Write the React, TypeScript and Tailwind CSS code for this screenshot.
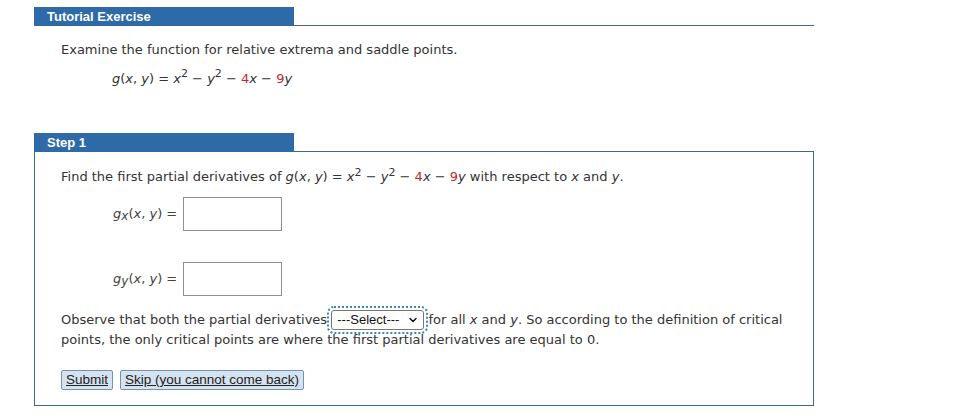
import { ChevronDown } from "lucide-react";

const Red = ({ children }: { children: React.ReactNode }) => (
  <span className="text-[#c0282d]">{children}</span>
);

const V = ({ children }: { children: React.ReactNode }) => <i>{children}</i>;

function Formula() {
  return (
    <span className="whitespace-nowrap">
      <V>g</V>(<V>x</V>, <V>y</V>) = <V>x</V>
      <sup className="text-[11px]">2</sup> − <V>y</V>
      <sup className="text-[11px]">2</sup> − <Red>4</Red>
      <V>x</V> − <Red>9</Red>
      <V>y</V>
    </span>
  );
}

function SectionBar({ title }: { title: string }) {
  return (
    <div className="flex items-end">
      <div className="w-[260px] h-[19px] bg-[#2e6aa7] text-white font-bold text-[13px] leading-[19px] pl-[13px] font-['Liberation_Sans',Arial,sans-serif]">
        {title}
      </div>
      <div className="w-[520px] h-px bg-[#3f6b80]" />
    </div>
  );
}

function AnswerRow({ sub }: { sub: string }) {
  return (
    <div className="flex items-center pl-[52px]">
      <span className="text-[#444]">
        <V>g</V>
        <sub className="text-[12px] relative top-[2px]">
          <V>{sub}</V>
        </sub>
        (<V>x</V>, <V>y</V>) =
      </span>
      <input
        type="text"
        className="ml-[6px] w-[99px] h-[34px] border border-[#8f8f8f] bg-white outline-none"
      />
    </div>
  );
}

export default function App() {
  return (
    <div className="min-h-screen bg-white text-[#333] text-[13px] font-['DejaVu_Sans',Verdana,sans-serif] pt-[7px] pl-[34px]">
      <SectionBar title="Tutorial Exercise" />
      <div className="pl-[27px] pt-[14px]">
        <p>Examine the function for relative extrema and saddle points.</p>
        <p className="pl-[51px] pt-[9px]">
          <Formula />
        </p>
      </div>

      <div className="mt-[45px]">
        <SectionBar title="Step 1" />
        <div className="w-[780px] h-[254px] border border-t-0 border-[#3f6b80] pl-[26px] pt-[15px]">
          <p>
            Find the first partial derivatives of <Formula /> with respect to{" "}
            <V>x</V> and <V>y</V>.
          </p>
          <div className="mt-[10px]">
            <AnswerRow sub="x" />
          </div>
          <div className="mt-[31px]">
            <AnswerRow sub="y" />
          </div>
          <p className="mt-[14px] leading-[20px] pr-[20px]">
            Observe that both the partial derivatives{" "}
            <span className="inline-flex align-middle outline-2 outline-dotted outline-[#3a86b8] outline-offset-[2px] rounded-[3px] -my-[2px]">
              <span className="inline-flex items-center h-[20px] w-[93px] border border-[#767676] rounded-[3px] bg-white text-[#111] text-[13px] font-['Liberation_Sans',Arial,sans-serif] pl-[5px] pr-[4px] justify-between">
                ---Select---
                <ChevronDown className="w-[12px] h-[12px]" strokeWidth={3} />
              </span>
            </span>{" "}
            for all <V>x</V> and <V>y</V>. So according to the definition of critical
            points, the only critical points are where the first partial derivatives
            are equal to 0.
          </p>
          <div className="mt-[20px] flex gap-[7px] font-['Liberation_Sans',Arial,sans-serif] text-[13.5px]">
            <button className="h-[20px] px-[4px] bg-[#d5e3f0] border border-[#7593ae] rounded-[2px] underline text-[#222] leading-[18px]">
              Submit
            </button>
            <button className="h-[20px] px-[4px] bg-[#d5e3f0] border border-[#7593ae] rounded-[2px] underline text-[#222] leading-[18px]">
              Skip (you cannot come back)
            </button>
          </div>
        </div>
      </div>
    </div>
  );
}
